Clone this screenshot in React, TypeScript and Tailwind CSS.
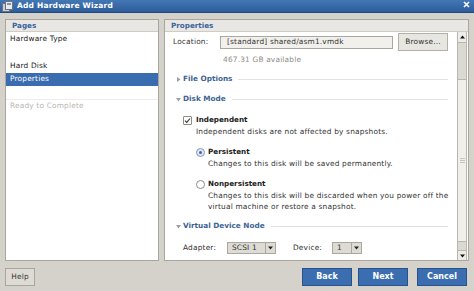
import React from "react";

const Tri = ({ down = true }: { down?: boolean }) => (
  <svg width="5" height="5" viewBox="0 0 5 5" className="shrink-0">
    {down ? <path d="M0 1 L5 1 L2.5 4.5 Z" fill="#9aa0a8" /> : <path d="M1 0 L4.5 2.5 L1 5 Z" fill="#9aa0a8" />}
  </svg>
);

const Section = ({ title, down = true }: { title: string; down?: boolean }) => (
  <div className="flex items-center h-[10px] pl-[3px]">
    <Tri down={down} />
    <span className="ml-[2px] font-bold text-[7.3px] tracking-normal text-[#3d6496] whitespace-nowrap">{title}</span>
    <div className="flex-1 ml-[6px] h-px bg-[#e4e2de]" />
  </div>
);

const Select = ({ value, w }: { value: string; w: string }) => (
  <div className={`${w} h-[12px] flex border border-[#aaa79f] bg-[#dedbd5]`}>
    <div className="flex-1 pl-[4px] flex items-center text-[#333]">{value}</div>
    <div className="w-[10px] border-l border-[#aaa79f] flex items-center justify-center">
      <svg width="5" height="4" viewBox="0 0 5 4"><path d="M0 0.5 L5 0.5 L2.5 3.5 Z" fill="#222" /></svg>
    </div>
  </div>
);

export default function App() {
  return (
    <div className="w-[474px] h-[291px] bg-[#d5d2cb] flex flex-col font-['DejaVu_Sans',sans-serif] text-[7.4px] tracking-[0.18px] leading-[10px] text-[#222] overflow-hidden">
      {/* Title bar */}
      <div className="h-[13px] bg-gradient-to-b from-[#4477b5] to-[#2d5d9a] border-b border-[#1f4a80] flex items-center px-[2px]">
        <svg width="12" height="11" viewBox="0 0 12 11" className="shrink-0">
          <rect x="0.5" y="2.5" width="7" height="8" fill="#c9ced6" stroke="#6d7480" />
          <rect x="3.5" y="0.5" width="7" height="8" fill="#e6e9ee" stroke="#6d7480" />
          <rect x="5" y="2" width="4" height="2" fill="#8a93a0" />
        </svg>
        <span className="ml-[3px] font-bold text-white text-[7.5px] tracking-[0.2px]">Add Hardware Wizard</span>
        <div className="flex-1" />
        <svg width="7" height="7" viewBox="0 0 7 7" className="mr-[2px] mb-[3px]">
          <path d="M1 1 L6 6 M6 1 L1 6" stroke="#fff" strokeWidth="1.6" />
        </svg>
      </div>

      {/* Main */}
      <div className="flex gap-[5px] px-[5px] mt-[6px] h-[242px]">
        {/* Left panel */}
        <div className="w-[154px] shrink-0 flex flex-col border border-[#a9a69e] bg-white">
          <div className="h-[12px] shrink-0 bg-[#e9e7e3] border-b border-[#cfccc5] flex items-center pl-[6px] font-bold text-[7.2px] tracking-normal text-[#3a63a0]">Pages</div>
          <div className="flex flex-col">
            <div className="h-[13.5px] flex items-center pl-[4px]">Hardware Type</div>
            <div className="h-[13.5px]" />
            <div className="h-[13.5px] flex items-center pl-[4px]">Hard Disk</div>
            <div className="h-[13.5px] flex items-center pl-[4px] bg-[#3a6cb0] text-white">Properties</div>
            <div className="h-[13.5px] border-b border-[#eeedeb]" />
            <div className="h-[13.5px] flex items-center pl-[4px] text-[#b8b6b2]">Ready to Complete</div>
          </div>
        </div>

        {/* Right panel */}
        <div className="flex-1 min-w-0 flex flex-col border border-[#a9a69e] bg-white">
          <div className="h-[12px] shrink-0 bg-[#e9e7e3] border-b border-[#cfccc5] flex items-center pl-[6px] font-bold text-[7.2px] tracking-normal text-[#3a63a0]">Properties</div>
          <div className="flex-1 flex min-w-0">
            <div className="flex-1 min-w-0 flex flex-col pl-[8px] pr-[9px]">
              {/* Location row */}
              <div className="flex items-center h-[18px] mt-[1px]">
                <span className="w-[47px] shrink-0 text-[#333]">Location:</span>
                <div className="w-[173px] shrink-0 h-[13px] bg-[#f2f0ec] border border-[#aaa79f] flex items-center pl-[6px] text-[#333] whitespace-nowrap">[standard] shared/asm1.vmdk</div>
                <div className="flex-1" />
                <div className="w-[50px] shrink-0 h-[18px] bg-[#e8e6e1] border border-[#b3b0a8] flex items-center justify-center text-[#333]">Browse...</div>
              </div>
              <div className="mt-[4px] pl-[50px] text-[#8f8d88]">467.31 GB available</div>

              <div className="mt-[9px]"><Section title="File Options" down={false} /></div>
              <div className="mt-[10px]"><Section title="Disk Mode" /></div>

              <div className="mt-[11px] flex items-center h-[10px] pl-[10px]">
                <div className="w-[9px] h-[9px] border border-[#8e8c87] bg-white flex items-center justify-center rounded-[1px]">
                  <svg width="7" height="7" viewBox="0 0 7 7"><path d="M1 3.6 L2.8 5.4 L6 1.5" stroke="#333" strokeWidth="1.1" fill="none" /></svg>
                </div>
                <span className="ml-[4px] font-bold text-[7.2px] tracking-normal">Independent</span>
              </div>
              <div className="mt-[2px] pl-[23px] text-[#333]">Independent disks are not affected by snapshots.</div>

              <div className="mt-[10px] flex items-center h-[10px] pl-[23px]">
                <div className="w-[9px] h-[9px] rounded-full border border-[#8a98b5] bg-[#dfe7f5] flex items-center justify-center">
                  <div className="w-[3px] h-[3px] rounded-full bg-[#3d66b0]" />
                </div>
                <span className="ml-[3px] font-bold text-[7.2px] tracking-normal">Persistent</span>
              </div>
              <div className="mt-[2px] pl-[35px] text-[#333]">Changes to this disk will be saved permanently.</div>

              <div className="mt-[10px] flex items-center h-[10px] pl-[23px]">
                <div className="w-[9px] h-[9px] rounded-full border border-[#8e8c87] bg-white" />
                <span className="ml-[3px] font-bold text-[7.2px] tracking-normal">Nonpersistent</span>
              </div>
              <div className="mt-[2px] pl-[35px] leading-[10.5px] text-[#333] whitespace-nowrap">
                Changes to this disk will be discarded when you power off the
                <br />
                virtual machine or restore a snapshot.
              </div>

              <div className="mt-[9px]"><Section title="Virtual Device Node" /></div>

              <div className="mt-[11px] flex items-center h-[12px] pl-[10px]">
                <span className="w-[44px] text-[#333]">Adapter:</span>
                <Select value="SCSI 1" w="w-[49px]" />
                <span className="ml-[17px] w-[39px] text-[#333]">Device:</span>
                <Select value="1" w="w-[30px]" />
              </div>
            </div>

            {/* Scrollbar */}
            <div className="w-[10px] shrink-0 mr-[1px] flex flex-col border-l border-r border-[#b9b6ae] bg-[#dcd9d2]">
              <div className="h-[11px] shrink-0 bg-[#eeece8] border-b border-[#b9b6ae] flex items-center justify-center">
                <svg width="5" height="4" viewBox="0 0 5 4"><path d="M0 3.5 L5 3.5 L2.5 0.5 Z" fill="#111" /></svg>
              </div>
              <div className="h-[36px] shrink-0" />
              <div className="h-[163px] shrink-0 bg-[#f1efeb] border-y border-[#b9b6ae] flex flex-col items-center justify-center gap-[1px]">
                <div className="w-[5px] h-px bg-[#c8c5be]" />
                <div className="w-[5px] h-px bg-[#c8c5be]" />
                <div className="w-[5px] h-px bg-[#c8c5be]" />
              </div>
              <div className="flex-1" />
              <div className="h-[10px] shrink-0 bg-[#eeece8] border-t border-[#b9b6ae] flex items-center justify-center">
                <svg width="5" height="4" viewBox="0 0 5 4"><path d="M0 0.5 L5 0.5 L2.5 3.5 Z" fill="#111" /></svg>
              </div>
            </div>
          </div>
        </div>
      </div>

      {/* Footer */}
      <div className="flex items-center px-[5px] mt-[7px]">
        <div className="w-[30px] h-[18px] bg-[#dedbd4] border border-[#a9a69e] flex items-center justify-center text-[#333]">Help</div>
        <div className="flex-1" />
        <div className="w-[50px] h-[18px] bg-[#3b6db1] border border-[#28528c] flex items-center justify-center font-bold text-white text-[8px] tracking-normal">Back</div>
        <div className="w-[50px] h-[18px] ml-[6px] bg-[#3b6db1] border border-[#28528c] flex items-center justify-center font-bold text-white text-[8px] tracking-normal">Next</div>
        <div className="w-[50px] h-[18px] ml-[9px] mr-[2px] bg-[#3b6db1] border border-[#28528c] flex items-center justify-center font-bold text-white text-[8px] tracking-normal">Cancel</div>
      </div>
    </div>
  );
}
